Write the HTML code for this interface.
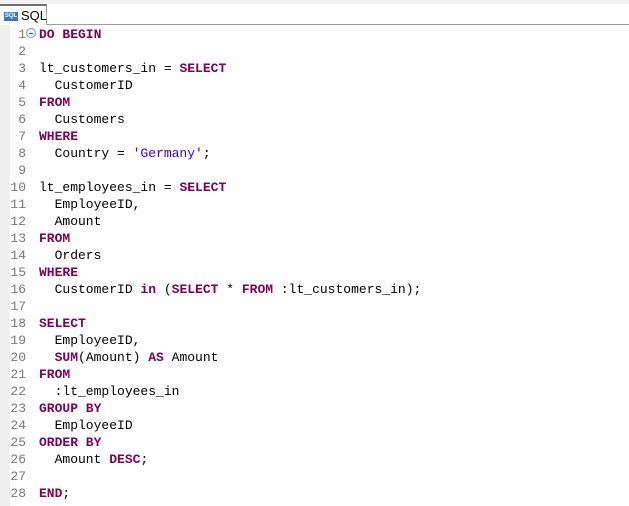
<!DOCTYPE html><html><head><style>
body{margin:0;width:629px;height:506px;background:#fff;position:relative;overflow:hidden;font-family:"Liberation Mono",monospace;}
.tabbar{position:absolute;left:0;top:0;width:629px;height:24px;background:#fff;border-bottom:1px solid #a0a0a0;}
.topline{position:absolute;left:0;top:0;width:629px;height:4px;background:#f2f2f2;}
.tab{position:absolute;left:0;top:4px;width:47px;height:21px;background:#fff;border-top:2px solid #707070;border-right:1px solid #a0a0a0;box-sizing:border-box;font-family:"Liberation Sans",sans-serif;font-size:13px;}
.ico{position:absolute;left:4px;top:6px;width:14px;height:9px;background:#3b78c4;color:#fff;font-size:6px;line-height:9px;font-weight:bold;text-align:center;}
.tt{position:absolute;left:21px;top:2px;color:#000;}
.gut{position:absolute;left:0;top:25px;width:10px;height:481px;background:#f0f0f0;}
.nums{position:absolute;left:10px;top:26px;width:16px;text-align:right;font-size:13px;line-height:17px;color:#787878;white-space:pre;}
.code{position:absolute;left:39px;top:26px;font-size:13px;line-height:17px;color:#000;white-space:pre;}
.k{color:#7f0055;font-weight:bold;}
.s{color:#2a00ff;}
.fold{position:absolute;left:26px;top:28px;width:8px;height:8px;border:1px solid #8a9bb0;border-radius:50%;background:#e8eef6;}
.fold:after{content:"";position:absolute;left:2px;top:3.5px;width:4px;height:1px;background:#4a5a70;}
</style></head><body>
<div class="tabbar"></div><div class="topline"></div>
<div class="tab"><div class="ico">SQL</div><span class="tt">SQL</span></div>
<div class="gut"></div>
<div class="nums">1
2
3
4
5
6
7
8
9
10
11
12
13
14
15
16
17
18
19
20
21
22
23
24
25
26
27
28</div>
<div class="fold"></div>
<div class="code"><span class="k">DO BEGIN</span>

lt_customers_in = <span class="k">SELECT</span>
  CustomerID
<span class="k">FROM</span>
  Customers
<span class="k">WHERE</span>
  Country = <span class="s">'Germany'</span>;

lt_employees_in = <span class="k">SELECT</span>
  EmployeeID,
  Amount
<span class="k">FROM</span>
  Orders
<span class="k">WHERE</span>
  CustomerID <span class="k">in</span> (<span class="k">SELECT</span> * <span class="k">FROM</span> :lt_customers_in);

<span class="k">SELECT</span>
  EmployeeID,
  <span class="k">SUM</span>(Amount) <span class="k">AS</span> Amount
<span class="k">FROM</span>
  :lt_employees_in
<span class="k">GROUP BY</span>
  EmployeeID
<span class="k">ORDER BY</span>
  Amount <span class="k">DESC</span>;

<span class="k">END</span>;</div>
</body></html>
